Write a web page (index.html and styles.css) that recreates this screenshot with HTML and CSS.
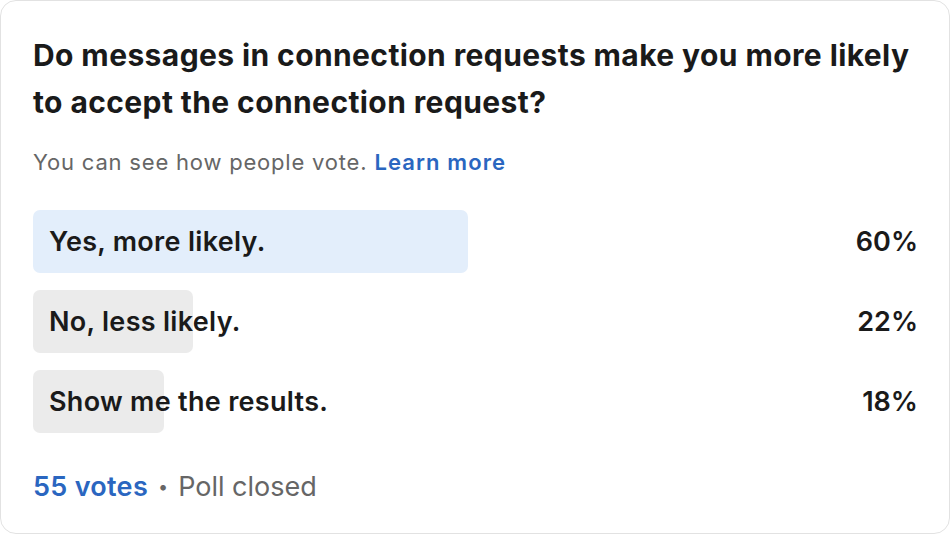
FILE: index.html
```html
<!DOCTYPE html>
<html lang="en">
<head>
<meta charset="utf-8">
<title>Poll</title>
<link rel="stylesheet" href="styles.css">
</head>
<body>
<div class="card">
  <h1 class="question">Do messages in connection requests make you more likely to accept the connection request?</h1>
  <p class="note">You can see how people vote. <a class="link" href="#">Learn more</a></p>
  <div class="options">
    <div class="option">
      <div class="track">
        <div class="bar bar-top" style="width:60%"></div>
        <span class="label">Yes, more likely.</span>
      </div>
      <span class="pct">60%</span>
    </div>
    <div class="option">
      <div class="track">
        <div class="bar" style="width:22%"></div>
        <span class="label">No, less likely.</span>
      </div>
      <span class="pct">22%</span>
    </div>
    <div class="option">
      <div class="track">
        <div class="bar" style="width:18%"></div>
        <span class="label">Show me the results.</span>
      </div>
      <span class="pct">18%</span>
    </div>
  </div>
  <div class="footer">
    <a class="votes" href="#">55 votes</a>
    <span class="dot">•</span>
    <span class="status">Poll closed</span>
  </div>
</div>
</body>
</html>
```
FILE: styles.css
```css
html, body {
  margin: 0;
  padding: 0;
  background: #ffffff;
}
body {
  font-family: Inter, "Noto Sans", "Liberation Sans", sans-serif;
  color: #1a1a1a;
}
.card {
  box-sizing: border-box;
  width: 950px;
  height: 534px;
  border: 1px solid #e2e2e2;
  border-radius: 16px;
  background: #ffffff;
  padding: 31px 32px 0 32px;
}
.question {
  margin: 0;
  font-size: 30px;
  font-weight: 700;
  line-height: 47px;
  color: #1a1a1a;
  letter-spacing: 0.4px;
  width: 886px;
}
.note {
  margin: 22px 0 0 0;
  font-size: 22px;
  line-height: 28px;
  color: #666666;
  letter-spacing: 0.8px;
}
.link {
  color: #2a66c0;
  font-weight: 600;
  text-decoration: none;
  letter-spacing: 1.1px;
}
.options {
  display: flex;
  flex-direction: column;
  gap: 17px;
  margin-top: 34px;
}
.option {
  display: grid;
  grid-template-columns: 725px 1fr;
  align-items: center;
  width: 885px;
}
.track {
  display: grid;
  height: 63px;
  align-items: center;
}
.bar {
  grid-area: 1 / 1;
  height: 63px;
  border-radius: 7px;
  background: #ebebeb;
}
.bar-top {
  background: #e3eefb;
}
.label {
  grid-area: 1 / 1;
  padding-left: 16px;
  font-size: 27px;
  font-weight: 600;
  color: #1a1a1a;
  white-space: nowrap;
  letter-spacing: 0.3px;
}
.pct {
  text-align: right;
  font-size: 27px;
  font-weight: 600;
  color: #1a1a1a;
}
.footer {
  margin-top: 39px;
  font-size: 27px;
  line-height: 30px;
  display: flex;
  align-items: center;
  gap: 10px;
}
.votes {
  color: #2a66c0;
  font-weight: 600;
  text-decoration: none;
  letter-spacing: 0.3px;
}
.dot {
  color: #666666;
  font-size: 18px;
}
.status {
  color: #666666;
}
```
